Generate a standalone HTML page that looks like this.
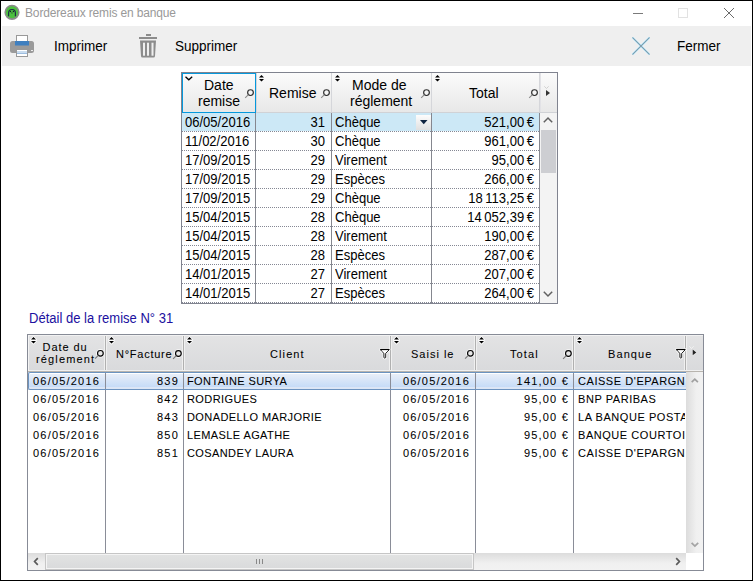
<!DOCTYPE html>
<html><head><meta charset="utf-8">
<style>
*{margin:0;padding:0;box-sizing:border-box}
html,body{width:753px;height:581px;overflow:hidden;background:#fff}
body{position:relative;font-family:"Liberation Sans", sans-serif;font-size:13px;color:#000}
.a{position:absolute}
.t{position:absolute;white-space:nowrap;line-height:16px}
.t14{position:absolute;white-space:nowrap;line-height:16px;font-size:14px;transform:scaleX(0.93);transform-origin:0 0}
.rr{width:300px;text-align:right;transform-origin:100% 0}
.cc{width:300px;text-align:center;transform-origin:50% 0}
.t11{position:absolute;white-space:nowrap;line-height:18px;font-size:11px;-webkit-text-stroke:0.06px #000}
.dot{position:absolute;height:1px;background-image:linear-gradient(90deg,#858894 50%,transparent 50%);background-size:2px 1px}
svg{position:absolute;overflow:visible}
</style></head><body>

<div class="a" style="left:0px;top:0px;width:753px;height:581px;border:1px solid #000"></div>
<svg style="left:3px;top:3px" width="18" height="18" viewBox="0 0 18 18">
  <circle cx="9" cy="9.3" r="6.8" fill="#4cc03f" stroke="#8a8a8a" stroke-width="1.6"/>
  <path d="M5.6 13.3 V9.9 A3.4 3.4 0 0 1 12.4 9.9 V13.3" fill="none" stroke="#1b2a44" stroke-width="1.15"/>
  <circle cx="7.4" cy="8.4" r=".75" fill="#10202a"/><circle cx="10.5" cy="8.4" r=".75" fill="#10202a"/>
  <path d="M8.3 9.3 L9.6 10.5 M9.6 9.3 L8.3 10.5" stroke="#2a5030" stroke-width=".6"/>
</svg>
<div class="t" style="left:25px;top:5px;font-size:12px;color:#999;letter-spacing:-0.15px">Bordereaux remis en banque</div>
<div class="a" style="left:633px;top:13px;width:10px;height:1px;background:#7a7a7a"></div>
<div class="a" style="left:678px;top:8px;width:10px;height:10px;border:1px solid #e2e2e2"></div>
<svg style="left:723px;top:7px" width="12" height="12" viewBox="0 0 12 12"><path d="M1 1 L11 11 M11 1 L1 11" stroke="#6a6a6a" stroke-width="1"/></svg>
<div class="a" style="left:2px;top:26px;width:749px;height:40px;background:#efefef"></div>
<svg style="left:9px;top:34px" width="26" height="24" viewBox="0 0 26 24">
  <rect x="7.5" y="1.5" width="11" height="7" fill="#fff" stroke="#999"/>
  <rect x="1" y="7" width="24" height="12" rx="2.5" fill="#9a9a9a"/>
  <rect x="6" y="7" width="14" height="4.5" fill="#3f7fbf"/>
  <rect x="7.5" y="15.5" width="11" height="7" fill="#fff" stroke="#999"/>
  <rect x="8" y="17" width="10" height="3" fill="#c9dcef"/>
  <rect x="8" y="19" width="10" height="1" fill="#9dbddf"/>
  <rect x="22" y="16" width="2" height="1" fill="#eee"/>
</svg>
<div class="t14" style="left:54px;top:38px;transform:scaleX(0.965)">Imprimer</div>
<svg style="left:136px;top:32px" width="24" height="28" viewBox="0 0 24 28">
  <rect x="10" y="2" width="5" height="2" fill="#8c8c8c"/>
  <rect x="3" y="5" width="18" height="2" fill="#8c8c8c"/>
  <path d="M4 8.5 H20 L19 24 Q19 25.5 17.5 25.5 H6.5 Q5 25.5 5 24 Z" fill="#8c8c8c"/>
  <rect x="7" y="10.7" width="2" height="13" fill="#efefef"/>
  <rect x="11" y="10.7" width="2" height="13" fill="#efefef"/>
  <rect x="15.5" y="10.7" width="2" height="13" fill="#efefef"/>
</svg>
<div class="t14" style="left:175px;top:38px;transform:scaleX(0.965)">Supprimer</div>
<svg style="left:631px;top:36px" width="20" height="20" viewBox="0 0 20 20">
  <path d="M1.5 1.5 L18.5 18.5 M18.5 1.5 L1.5 18.5" stroke="#7cc9ee" stroke-width="1.6"/>
  <path d="M1.5 1.5 L18.5 18.5 M18.5 1.5 L1.5 18.5" stroke="#8a8a8a" stroke-width=".7"/>
</svg>
<div class="t14" style="left:677px;top:38px;transform:scaleX(0.965)">Fermer</div>
<div class="a" style="left:181px;top:72px;width:377px;height:232px;border:1px solid #80838f;background:#fff"></div>
<div class="a" style="left:182px;top:73px;width:375px;height:39px;background:linear-gradient(#fbfbfb,#e8e8e8)"></div>
<div class="a" style="left:182px;top:112px;width:375px;height:1px;background:#d0d2d6"></div>
<div class="a" style="left:255px;top:73px;width:1px;height:39px;background:#d5d6da"></div>
<div class="a" style="left:331px;top:73px;width:1px;height:39px;background:#d5d6da"></div>
<div class="a" style="left:431px;top:73px;width:1px;height:39px;background:#d5d6da"></div>
<div class="a" style="left:539px;top:73px;width:1px;height:39px;background:#d5d6da"></div>
<div class="a" style="left:182px;top:73px;width:74px;height:40px;border:1px solid #0598dc"></div>
<div class="a" style="left:256px;top:73px;width:1px;height:39px;background:#d5d6da"></div>
<svg style="left:185px;top:76px" width="8" height="5" viewBox="0 0 8 5"><path d="M0.5 0.8 L3.8 3.8 L7.2 0.8" fill="none" stroke="#000" stroke-width="1.3"/></svg>
<div class="t14" style="left:204px;top:77px;transform:none;">Date</div>
<div class="t14" style="left:198px;top:93px;transform:none;">remise</div>
<svg style="left:319px;top:88px" width="12" height="11" viewBox="0 0 12 11"><circle cx="7.50" cy="4.60" r="2.85" fill="#f6f6f6" stroke="#2a2a2a" stroke-width="1.15"/><path d="M5.40 6.70 L2.20 9.90" stroke="#8a8a8a" stroke-width="1.1"/></svg>
<svg style="left:243px;top:88px" width="12" height="11" viewBox="0 0 12 11"><circle cx="7.50" cy="4.60" r="2.85" fill="#f6f6f6" stroke="#2a2a2a" stroke-width="1.15"/><path d="M5.40 6.70 L2.20 9.90" stroke="#8a8a8a" stroke-width="1.1"/></svg>
<svg style="left:259px;top:75px" width="6" height="7" viewBox="0 0 6 7"><path d="M0 2.6 L5 2.6 L2.5 0 Z M0 4 L5 4 L2.5 6.6 Z" fill="#000"/></svg>
<div class="t14" style="left:269px;top:85px;transform:none;">Remise</div>
<svg style="left:335px;top:75px" width="6" height="7" viewBox="0 0 6 7"><path d="M0 2.6 L5 2.6 L2.5 0 Z M0 4 L5 4 L2.5 6.6 Z" fill="#000"/></svg>
<div class="t14" style="left:352px;top:77px;transform:none;">Mode de</div>
<div class="t14" style="left:350px;top:93px;transform:none;">réglement</div>
<svg style="left:419px;top:88px" width="12" height="11" viewBox="0 0 12 11"><circle cx="7.50" cy="4.60" r="2.85" fill="#f6f6f6" stroke="#2a2a2a" stroke-width="1.15"/><path d="M5.40 6.70 L2.20 9.90" stroke="#8a8a8a" stroke-width="1.1"/></svg>
<svg style="left:435px;top:75px" width="6" height="7" viewBox="0 0 6 7"><path d="M0 2.6 L5 2.6 L2.5 0 Z M0 4 L5 4 L2.5 6.6 Z" fill="#000"/></svg>
<div class="t14" style="left:469px;top:85px;transform:none;">Total</div>
<svg style="left:527px;top:88px" width="12" height="11" viewBox="0 0 12 11"><circle cx="7.50" cy="4.60" r="2.85" fill="#f6f6f6" stroke="#2a2a2a" stroke-width="1.15"/><path d="M5.40 6.70 L2.20 9.90" stroke="#8a8a8a" stroke-width="1.1"/></svg>
<div class="a" style="left:540px;top:73px;width:1px;height:39px;background:#e2e2e6"></div>
<svg style="left:543.5px;top:86px" width="5" height="3" viewBox="0 0 5 3"><path d="M0.3 0.3 L2.5 2.5 L4.7 0.3" fill="none" stroke="#c8c8c8" stroke-width=".8"/></svg>
<svg style="left:546px;top:89.5px" width="4" height="6" viewBox="0 0 4 6"><path d="M0 0 L4 3 L0 6 Z" fill="#333"/></svg>
<div class="a" style="left:182px;top:113px;width:357px;height:18px;background:#cce8f6"></div>
<div class="dot" style="left:182px;top:131px;width:357px"></div>
<div class="t14" style="left:185px;top:114px;">06/05/2016</div>
<div class="t14 rr" style="left:25px;top:114px;">31</div>
<div class="t14" style="left:335px;top:114px;">Chèque</div>
<div class="t14 rr" style="left:234px;top:114px;">521,00&#8239;€</div>
<div class="dot" style="left:182px;top:150px;width:357px"></div>
<div class="t14" style="left:185px;top:133px;">11/02/2016</div>
<div class="t14 rr" style="left:25px;top:133px;">30</div>
<div class="t14" style="left:335px;top:133px;">Chèque</div>
<div class="t14 rr" style="left:234px;top:133px;">961,00&#8239;€</div>
<div class="dot" style="left:182px;top:169px;width:357px"></div>
<div class="t14" style="left:185px;top:152px;">17/09/2015</div>
<div class="t14 rr" style="left:25px;top:152px;">29</div>
<div class="t14" style="left:335px;top:152px;">Virement</div>
<div class="t14 rr" style="left:234px;top:152px;">95,00&#8239;€</div>
<div class="dot" style="left:182px;top:188px;width:357px"></div>
<div class="t14" style="left:185px;top:171px;">17/09/2015</div>
<div class="t14 rr" style="left:25px;top:171px;">29</div>
<div class="t14" style="left:335px;top:171px;">Espèces</div>
<div class="t14 rr" style="left:234px;top:171px;">266,00&#8239;€</div>
<div class="dot" style="left:182px;top:207px;width:357px"></div>
<div class="t14" style="left:185px;top:190px;">17/09/2015</div>
<div class="t14 rr" style="left:25px;top:190px;">29</div>
<div class="t14" style="left:335px;top:190px;">Chèque</div>
<div class="t14 rr" style="left:234px;top:190px;">18&#8239;113,25&#8239;€</div>
<div class="dot" style="left:182px;top:226px;width:357px"></div>
<div class="t14" style="left:185px;top:209px;">15/04/2015</div>
<div class="t14 rr" style="left:25px;top:209px;">28</div>
<div class="t14" style="left:335px;top:209px;">Chèque</div>
<div class="t14 rr" style="left:234px;top:209px;">14&#8239;052,39&#8239;€</div>
<div class="dot" style="left:182px;top:245px;width:357px"></div>
<div class="t14" style="left:185px;top:228px;">15/04/2015</div>
<div class="t14 rr" style="left:25px;top:228px;">28</div>
<div class="t14" style="left:335px;top:228px;">Virement</div>
<div class="t14 rr" style="left:234px;top:228px;">190,00&#8239;€</div>
<div class="dot" style="left:182px;top:264px;width:357px"></div>
<div class="t14" style="left:185px;top:247px;">15/04/2015</div>
<div class="t14 rr" style="left:25px;top:247px;">28</div>
<div class="t14" style="left:335px;top:247px;">Espèces</div>
<div class="t14 rr" style="left:234px;top:247px;">287,00&#8239;€</div>
<div class="dot" style="left:182px;top:283px;width:357px"></div>
<div class="t14" style="left:185px;top:266px;">14/01/2015</div>
<div class="t14 rr" style="left:25px;top:266px;">27</div>
<div class="t14" style="left:335px;top:266px;">Virement</div>
<div class="t14 rr" style="left:234px;top:266px;">207,00&#8239;€</div>
<div class="dot" style="left:182px;top:302px;width:357px"></div>
<div class="t14" style="left:185px;top:285px;">14/01/2015</div>
<div class="t14 rr" style="left:25px;top:285px;">27</div>
<div class="t14" style="left:335px;top:285px;">Espèces</div>
<div class="t14 rr" style="left:234px;top:285px;">264,00&#8239;€</div>
<div class="a" style="left:255px;top:113px;width:1px;height:190px;background:#85878f"></div>
<div class="a" style="left:331px;top:113px;width:1px;height:190px;background:#85878f"></div>
<div class="a" style="left:431px;top:113px;width:1px;height:190px;background:#85878f"></div>
<div class="a" style="left:539px;top:113px;width:1px;height:190px;background:#85878f"></div>
<div class="a" style="left:416px;top:115px;width:15px;height:15px;background:linear-gradient(#fdfdfd,#e0e0e0)"></div>
<svg style="left:420px;top:120px" width="8" height="5" viewBox="0 0 8 5"><path d="M0 0 H7.5 L3.75 4.2 Z" fill="#0f2440"/></svg>
<div class="a" style="left:540px;top:113px;width:17px;height:190px;background:#f3f3f3"></div>
<div class="a" style="left:541px;top:130px;width:15px;height:43px;background:#cdced2"></div>
<svg style="left:543px;top:117px" width="10" height="6" viewBox="0 0 10 6"><path d="M0.8 5.2 L5 1 L9.2 5.2" fill="none" stroke="#606060" stroke-width="1.5"/></svg>
<svg style="left:543px;top:291px" width="10" height="6" viewBox="0 0 10 6"><path d="M0.8 0.8 L5 5 L9.2 0.8" fill="none" stroke="#606060" stroke-width="1.5"/></svg>
<div class="t14" style="left:29px;top:310px;color:#2010a0">Détail de la remise N° 31</div>
<div class="a" style="left:27px;top:334px;width:677px;height:237px;border:1px solid #878b96;background:#fff"></div>
<div class="a" style="left:28px;top:335px;width:675px;height:1px;background:#f2f2f2"></div>
<div class="a" style="left:28px;top:336px;width:675px;height:34px;background:linear-gradient(#e3e3e4,#d9dadc)"></div>
<div class="a" style="left:28px;top:370px;width:675px;height:1px;background:#f0f0f0"></div>
<div class="a" style="left:28px;top:371px;width:675px;height:1px;background:#b8b4ae"></div>
<div class="a" style="left:28px;top:335px;width:1px;height:36px;background:#f4f4f4"></div>
<div class="a" style="left:104px;top:336px;width:1px;height:34px;background:#f0f0f0"></div>
<div class="a" style="left:105px;top:336px;width:1px;height:34px;background:#b0b0b0"></div>
<div class="a" style="left:106px;top:336px;width:1px;height:34px;background:#f0f0f0"></div>
<div class="a" style="left:182px;top:336px;width:1px;height:34px;background:#f0f0f0"></div>
<div class="a" style="left:183px;top:336px;width:1px;height:34px;background:#b0b0b0"></div>
<div class="a" style="left:184px;top:336px;width:1px;height:34px;background:#f0f0f0"></div>
<div class="a" style="left:389px;top:336px;width:1px;height:34px;background:#f0f0f0"></div>
<div class="a" style="left:390px;top:336px;width:1px;height:34px;background:#b0b0b0"></div>
<div class="a" style="left:391px;top:336px;width:1px;height:34px;background:#f0f0f0"></div>
<div class="a" style="left:474px;top:336px;width:1px;height:34px;background:#f0f0f0"></div>
<div class="a" style="left:475px;top:336px;width:1px;height:34px;background:#b0b0b0"></div>
<div class="a" style="left:476px;top:336px;width:1px;height:34px;background:#f0f0f0"></div>
<div class="a" style="left:572px;top:336px;width:1px;height:34px;background:#f0f0f0"></div>
<div class="a" style="left:573px;top:336px;width:1px;height:34px;background:#b0b0b0"></div>
<div class="a" style="left:574px;top:336px;width:1px;height:34px;background:#f0f0f0"></div>
<div class="a" style="left:684px;top:336px;width:1px;height:34px;background:#f0f0f0"></div>
<div class="a" style="left:685px;top:336px;width:1px;height:34px;background:#b0b0b0"></div>
<div class="a" style="left:686px;top:336px;width:1px;height:34px;background:#f0f0f0"></div>
<div class="a" style="left:105px;top:372px;width:1px;height:181px;background:#8a8d98"></div>
<div class="a" style="left:183px;top:372px;width:1px;height:181px;background:#8a8d98"></div>
<div class="a" style="left:390px;top:372px;width:1px;height:181px;background:#8a8d98"></div>
<div class="a" style="left:475px;top:372px;width:1px;height:181px;background:#8a8d98"></div>
<div class="a" style="left:573px;top:372px;width:1px;height:181px;background:#8a8d98"></div>
<div class="a" style="left:28px;top:372px;width:658px;height:18px;border:1px solid #6b93c0;border-right:none;border-radius:2px 0 0 2px;background:linear-gradient(#fff 0,#fff 1px,#e8eef8 1px,#c6dcf7 14px,#dce6f5 14px)"></div>
<div class="a" style="left:105px;top:373px;width:1px;height:16px;background:#8a8d98"></div>
<div class="a" style="left:183px;top:373px;width:1px;height:16px;background:#8a8d98"></div>
<div class="a" style="left:390px;top:373px;width:1px;height:16px;background:#8a8d98"></div>
<div class="a" style="left:475px;top:373px;width:1px;height:16px;background:#8a8d98"></div>
<div class="a" style="left:573px;top:373px;width:1px;height:16px;background:#8a8d98"></div>
<div class="t11" style="left:33px;top:372px;letter-spacing:1.2px">06/05/2016</div>
<div class="t11" style="left:-21px;top:372px;width:200px;text-align:right;letter-spacing:1.2px">839</div>
<div class="t11" style="left:187px;top:372px;letter-spacing:0.4px">FONTAINE SURYA</div>
<div class="t11" style="left:270px;top:372px;width:200px;text-align:right;letter-spacing:1.2px">06/05/2016</div>
<div class="t11" style="left:369px;top:372px;width:200px;text-align:right;letter-spacing:1.2px">141,00 €</div>
<div class="t11" style="left:578px;top:372px;letter-spacing:0.55px;width:107px;overflow:hidden">CAISSE D'EPARGN</div>
<div class="t11" style="left:33px;top:390px;letter-spacing:1.2px">06/05/2016</div>
<div class="t11" style="left:-21px;top:390px;width:200px;text-align:right;letter-spacing:1.2px">842</div>
<div class="t11" style="left:187px;top:390px;letter-spacing:0.4px">RODRIGUES</div>
<div class="t11" style="left:270px;top:390px;width:200px;text-align:right;letter-spacing:1.2px">06/05/2016</div>
<div class="t11" style="left:369px;top:390px;width:200px;text-align:right;letter-spacing:1.2px">95,00 €</div>
<div class="t11" style="left:578px;top:390px;letter-spacing:0.55px;width:107px;overflow:hidden">BNP PARIBAS</div>
<div class="t11" style="left:33px;top:408px;letter-spacing:1.2px">06/05/2016</div>
<div class="t11" style="left:-21px;top:408px;width:200px;text-align:right;letter-spacing:1.2px">843</div>
<div class="t11" style="left:187px;top:408px;letter-spacing:0.4px">DONADELLO MARJORIE</div>
<div class="t11" style="left:270px;top:408px;width:200px;text-align:right;letter-spacing:1.2px">06/05/2016</div>
<div class="t11" style="left:369px;top:408px;width:200px;text-align:right;letter-spacing:1.2px">95,00 €</div>
<div class="t11" style="left:578px;top:408px;letter-spacing:0.55px;width:107px;overflow:hidden">LA BANQUE POSTA</div>
<div class="t11" style="left:33px;top:426px;letter-spacing:1.2px">06/05/2016</div>
<div class="t11" style="left:-21px;top:426px;width:200px;text-align:right;letter-spacing:1.2px">850</div>
<div class="t11" style="left:187px;top:426px;letter-spacing:0.4px">LEMASLE AGATHE</div>
<div class="t11" style="left:270px;top:426px;width:200px;text-align:right;letter-spacing:1.2px">06/05/2016</div>
<div class="t11" style="left:369px;top:426px;width:200px;text-align:right;letter-spacing:1.2px">95,00 €</div>
<div class="t11" style="left:578px;top:426px;letter-spacing:0.55px;width:107px;overflow:hidden">BANQUE COURTOI</div>
<div class="t11" style="left:33px;top:444px;letter-spacing:1.2px">06/05/2016</div>
<div class="t11" style="left:-21px;top:444px;width:200px;text-align:right;letter-spacing:1.2px">851</div>
<div class="t11" style="left:187px;top:444px;letter-spacing:0.4px">COSANDEY LAURA</div>
<div class="t11" style="left:270px;top:444px;width:200px;text-align:right;letter-spacing:1.2px">06/05/2016</div>
<div class="t11" style="left:369px;top:444px;width:200px;text-align:right;letter-spacing:1.2px">95,00 €</div>
<div class="t11" style="left:578px;top:444px;letter-spacing:0.55px;width:107px;overflow:hidden">CAISSE D'EPARGN</div>
<svg style="left:31px;top:337px" width="6" height="7" viewBox="0 0 6 7"><path d="M0 2.6 L5 2.6 L2.5 0 Z M0 4 L5 4 L2.5 6.6 Z" fill="none" stroke="#fff" stroke-width="1.6" stroke-linejoin="round"/><path d="M0 2.6 L5 2.6 L2.5 0 Z M0 4 L5 4 L2.5 6.6 Z" fill="#000"/></svg>
<svg style="left:109px;top:337px" width="6" height="7" viewBox="0 0 6 7"><path d="M0 2.6 L5 2.6 L2.5 0 Z M0 4 L5 4 L2.5 6.6 Z" fill="none" stroke="#fff" stroke-width="1.6" stroke-linejoin="round"/><path d="M0 2.6 L5 2.6 L2.5 0 Z M0 4 L5 4 L2.5 6.6 Z" fill="#000"/></svg>
<svg style="left:187px;top:337px" width="6" height="7" viewBox="0 0 6 7"><path d="M0 2.6 L5 2.6 L2.5 0 Z M0 4 L5 4 L2.5 6.6 Z" fill="none" stroke="#fff" stroke-width="1.6" stroke-linejoin="round"/><path d="M0 2.6 L5 2.6 L2.5 0 Z M0 4 L5 4 L2.5 6.6 Z" fill="#000"/></svg>
<svg style="left:394px;top:337px" width="6" height="7" viewBox="0 0 6 7"><path d="M0 2.6 L5 2.6 L2.5 0 Z M0 4 L5 4 L2.5 6.6 Z" fill="none" stroke="#fff" stroke-width="1.6" stroke-linejoin="round"/><path d="M0 2.6 L5 2.6 L2.5 0 Z M0 4 L5 4 L2.5 6.6 Z" fill="#000"/></svg>
<svg style="left:479px;top:337px" width="6" height="7" viewBox="0 0 6 7"><path d="M0 2.6 L5 2.6 L2.5 0 Z M0 4 L5 4 L2.5 6.6 Z" fill="none" stroke="#fff" stroke-width="1.6" stroke-linejoin="round"/><path d="M0 2.6 L5 2.6 L2.5 0 Z M0 4 L5 4 L2.5 6.6 Z" fill="#000"/></svg>
<svg style="left:577px;top:337px" width="6" height="7" viewBox="0 0 6 7"><path d="M0 2.6 L5 2.6 L2.5 0 Z M0 4 L5 4 L2.5 6.6 Z" fill="none" stroke="#fff" stroke-width="1.6" stroke-linejoin="round"/><path d="M0 2.6 L5 2.6 L2.5 0 Z M0 4 L5 4 L2.5 6.6 Z" fill="#000"/></svg>
<div class="t11" style="left:42.5px;top:341px;line-height:12px;letter-spacing:0.95px">Date du</div>
<div class="t11" style="left:36px;top:353px;line-height:12px;letter-spacing:1.15px">réglement</div>
<div class="t11" style="left:116px;top:345px;letter-spacing:0.75px">N°Facture</div>
<div class="t11" style="left:270px;top:345px;letter-spacing:1.1px">Client</div>
<div class="t11" style="left:411px;top:345px;letter-spacing:1.0px">Saisi le</div>
<div class="t11" style="left:510px;top:345px;letter-spacing:1.1px">Total</div>
<div class="t11" style="left:608px;top:345px;letter-spacing:1.1px">Banque</div>
<svg style="left:93px;top:349px" width="12" height="11" viewBox="0 0 12 11"><circle cx="7.400000000000006" cy="4.300000000000011" r="3" fill="none" stroke="#fafafa" stroke-width="2.6"/><circle cx="7.400000000000006" cy="4.300000000000011" r="2.85" fill="#e6e6e6" stroke="#000" stroke-width="1.15"/><path d="M5.300000000000006 6.400000000000011 L2.100000000000006 9.600000000000012" stroke="#777" stroke-width="1.1"/></svg>
<svg style="left:171px;top:349px" width="12" height="11" viewBox="0 0 12 11"><circle cx="7.400000000000006" cy="4.5" r="3" fill="none" stroke="#fafafa" stroke-width="2.6"/><circle cx="7.400000000000006" cy="4.5" r="2.85" fill="#e6e6e6" stroke="#000" stroke-width="1.15"/><path d="M5.300000000000006 6.6 L2.100000000000006 9.8" stroke="#777" stroke-width="1.1"/></svg>
<svg style="left:463px;top:349px" width="12" height="11" viewBox="0 0 12 11"><circle cx="7.399999999999977" cy="4.300000000000011" r="3" fill="none" stroke="#fafafa" stroke-width="2.6"/><circle cx="7.399999999999977" cy="4.300000000000011" r="2.85" fill="#e6e6e6" stroke="#000" stroke-width="1.15"/><path d="M5.299999999999978 6.400000000000011 L2.0999999999999774 9.600000000000012" stroke="#777" stroke-width="1.1"/></svg>
<svg style="left:561px;top:349px" width="12" height="11" viewBox="0 0 12 11"><circle cx="7.399999999999977" cy="4.5" r="3" fill="none" stroke="#fafafa" stroke-width="2.6"/><circle cx="7.399999999999977" cy="4.5" r="2.85" fill="#e6e6e6" stroke="#000" stroke-width="1.15"/><path d="M5.299999999999978 6.6 L2.0999999999999774 9.8" stroke="#777" stroke-width="1.1"/></svg>
<svg style="left:380px;top:349.2px" width="10" height="10" viewBox="0 0 10 10"><path d="M0.4 0.5 H9.2 Q8.6 1.8 5.7 4.3 V8.6 Q4.8 9.6 3.9 8.6 V4.3 Q1 1.8 0.4 0.5 Z" fill="#fff" stroke="#fff" stroke-width="2.4" stroke-linejoin="round"/><path d="M0.4 0.5 H9.2 Q8.6 1.8 5.7 4.3 V8.6 Q4.8 9.6 3.9 8.6 V4.3 Q1 1.8 0.4 0.5 Z" fill="#fff" stroke="#111" stroke-width="0.95" stroke-linejoin="round"/><path d="M0.4 0.5 H9.2" stroke="#000" stroke-width="1.2"/></svg>
<svg style="left:676px;top:349.2px" width="10" height="10" viewBox="0 0 10 10"><path d="M0.4 0.5 H9.2 Q8.6 1.8 5.7 4.3 V8.6 Q4.8 9.6 3.9 8.6 V4.3 Q1 1.8 0.4 0.5 Z" fill="#fff" stroke="#fff" stroke-width="2.4" stroke-linejoin="round"/><path d="M0.4 0.5 H9.2 Q8.6 1.8 5.7 4.3 V8.6 Q4.8 9.6 3.9 8.6 V4.3 Q1 1.8 0.4 0.5 Z" fill="#fff" stroke="#111" stroke-width="0.95" stroke-linejoin="round"/><path d="M0.4 0.5 H9.2" stroke="#000" stroke-width="1.2"/></svg>
<svg style="left:692px;top:349px" width="5" height="7" viewBox="0 0 5 7"><path d="M0.7 0.6 L4.3 3.4 L0.7 6.2 Z" fill="#222" stroke="#fff" stroke-width="0.6" paint-order="stroke"/></svg>
<svg style="left:688.5px;top:345.5px" width="5" height="3" viewBox="0 0 5 3"><path d="M0.3 0.3 L2.5 2.5 L4.7 0.3" fill="none" stroke="#f6f6f6" stroke-width=".8"/></svg>
<div class="a" style="left:686px;top:372px;width:17px;height:181px;background:linear-gradient(90deg,#dcdcdc,#f0f0f0 60%,#f2f2f2)"></div>
<svg style="left:690.5px;top:377.5px" width="8" height="5" viewBox="0 0 8 5"><path d="M0.7 4.2 L3.8 1.1 L6.9 4.2" fill="none" stroke="#a0a0a0" stroke-width="1.7"/></svg>
<svg style="left:690.5px;top:542px" width="8" height="5" viewBox="0 0 8 5"><path d="M0.6 0.9 L3.9 4.1 L7.2 0.9" fill="none" stroke="#a4a4a4" stroke-width="1.8"/></svg>
<div class="a" style="left:28px;top:553px;width:658px;height:17px;background:linear-gradient(#dcdcdc,#f0f0f0 60%,#f2f2f2)"></div>
<div class="a" style="left:45px;top:553px;width:429px;height:17px;border:1px solid #c6c6c6;background:linear-gradient(#e2e3e3,#d9dadb)"></div>
<div class="a" style="left:46px;top:554px;width:427px;height:15px;border:1px solid #f4f4f4"></div>
<div class="a" style="left:256px;top:559px;width:1px;height:5px;background:#888"></div>
<div class="a" style="left:259px;top:559px;width:1px;height:5px;background:#888"></div>
<div class="a" style="left:262px;top:559px;width:1px;height:5px;background:#888"></div>
<svg style="left:33px;top:557px" width="6" height="10" viewBox="0 0 6 10"><path d="M4.8 1.2 L1.6 4.5 L4.8 7.8" fill="none" stroke="#5a5a5a" stroke-width="1.7" stroke-linejoin="miter"/></svg>
<svg style="left:675px;top:557px" width="6" height="10" viewBox="0 0 6 10"><path d="M1.2 1.2 L4.4 4.5 L1.2 7.8" fill="none" stroke="#5a5a5a" stroke-width="1.7" stroke-linejoin="miter"/></svg>
<div class="a" style="left:686px;top:553px;width:17px;height:17px;background:#fff"></div>
</body></html>
